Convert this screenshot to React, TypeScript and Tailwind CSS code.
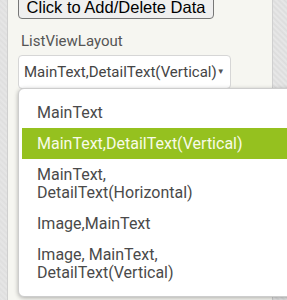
const options = [
  ['MainText'],
  ['MainText,DetailText(Vertical)'],
  ['MainText,', 'DetailText(Horizontal)'],
  ['Image,MainText'],
  ['Image, MainText,', 'DetailText(Vertical)'],
];

const selected = 1;

export default function App() {
  return (
    <div className="relative flex h-[300px] w-[287px] overflow-hidden bg-[#e2e2e2] font-['Roboto',sans-serif]">
      <div className="w-[7px] shrink-0 bg-[repeating-linear-gradient(45deg,#dedede_0px,#e6e6e6_2px,#dedede_4px)]" />
      <div className="flex w-[266px] shrink-0 flex-col border-x border-[#cfcfcf] bg-[#f6f6f1] px-[10px]">
        <button className="mt-[-9px] h-[28px] w-[196px] whitespace-nowrap rounded-[4px] border border-[#777] bg-[#efefef] px-0 pt-[4px] font-['Liberation_Sans',Arial,sans-serif] text-[16.5px] leading-[18px] text-black">
          Click to Add/Delete Data
        </button>
        <div className="mt-[12px] pl-[3px] text-[15px] leading-[20px] text-[#555]">ListViewLayout</div>
        <div className="mt-[4px] flex h-[34px] w-[213px] items-center justify-between rounded-[4px] border border-[#d6d6d6] bg-white pl-[5px] pr-[6px] text-[15px] text-[#444]">
          <span>MainText,DetailText(Vertical)</span>
          <span className="text-[8px] text-[#555]">▼</span>
        </div>
        <div className="mt-[12px] pl-[4px] text-[15px] text-[#222]">Placeholder</div>
      </div>
      <div className="flex-1 bg-[repeating-linear-gradient(45deg,#dcdcdc_0px,#e8e8e8_2px,#dcdcdc_4px)]" />

      <div className="absolute left-[18px] top-[88px] w-[290px] rounded-[6px] border border-[#cdcdcd] bg-white py-[8px] pl-[3px] shadow-[0_1px_4px_rgba(0,0,0,0.3)]">
        {options.map((lines, i) => (
          <div
            key={i}
            className={
              i === selected
                ? 'bg-[#95c11f] py-[6.5px] pl-[15px] text-[16px] leading-[18px] text-[#f8fbe8]'
                : 'py-[6.5px] pl-[15px] text-[16px] leading-[18px] text-[#4a4a4a]'
            }
          >
            {lines.map((l) => (
              <div key={l}>{l}</div>
            ))}
          </div>
        ))}
      </div>
    </div>
  );
}
